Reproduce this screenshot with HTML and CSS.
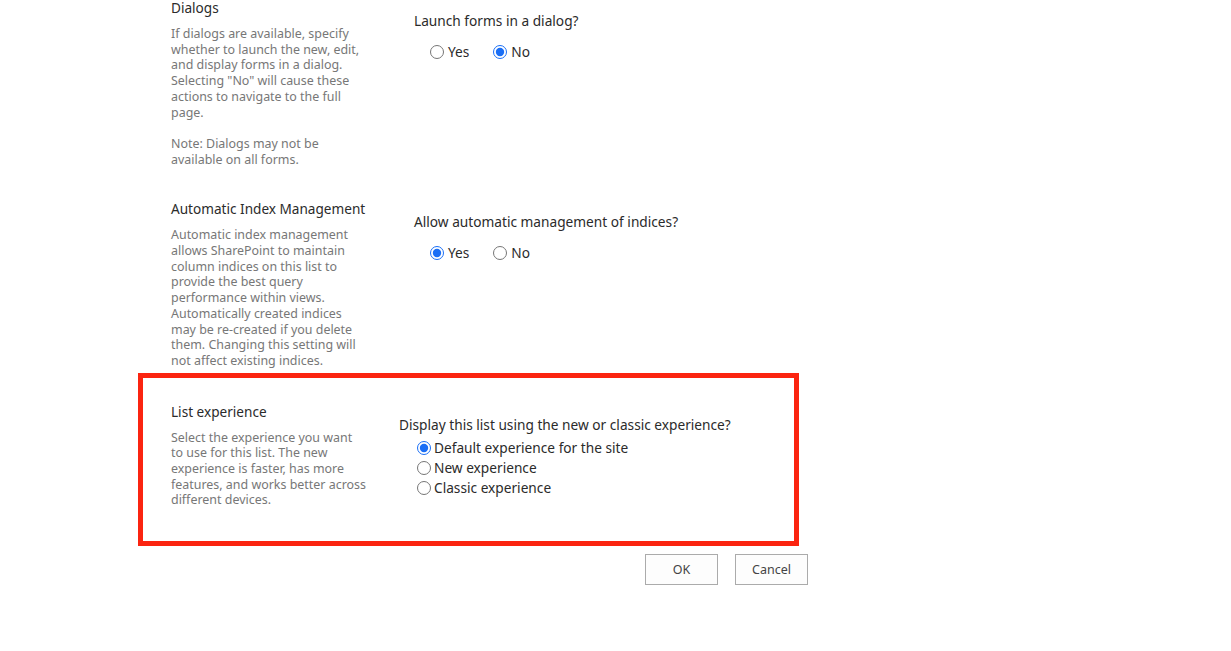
FILE: index.html
```html
<!DOCTYPE html>
<html lang="en">
<head>
<meta charset="utf-8">
<title>List settings</title>
<link rel="stylesheet" href="styles.css">
</head>
<body>
<div class="page">
  <section class="section section-first">
    <div class="info">
      <h3 class="heading">Dialogs</h3>
      <p class="desc">If dialogs are available, specify whether to launch the new, edit, and display forms in a dialog. Selecting "No" will cause these actions to navigate to the full page.</p>
      <p class="desc desc-gap">Note: Dialogs may not be available on all forms.</p>
    </div>
    <div class="control">
      <div class="question">Launch forms in a dialog?</div>
      <div class="inline-options">
        <label class="opt"><input type="radio" name="dialog"><span>Yes</span></label>
        <label class="opt"><input type="radio" name="dialog" checked><span>No</span></label>
      </div>
    </div>
  </section>

  <section class="section section-second">
    <div class="info">
      <h3 class="heading">Automatic Index Management</h3>
      <p class="desc">Automatic index management allows SharePoint to maintain column indices on this list to provide the best query performance within views. Automatically created indices may be re-created if you delete them. Changing this setting will not affect existing indices.</p>
    </div>
    <div class="control">
      <div class="question">Allow automatic management of indices?</div>
      <div class="inline-options">
        <label class="opt"><input type="radio" name="index" checked><span>Yes</span></label>
        <label class="opt"><input type="radio" name="index"><span>No</span></label>
      </div>
    </div>
  </section>

  <section class="section section-highlight">
    <div class="info">
      <h3 class="heading">List experience</h3>
      <p class="desc">Select the experience you want to use for this list. The new experience is faster, has more features, and works better across different devices.</p>
    </div>
    <div class="control">
      <div class="question">Display this list using the new or classic experience?</div>
      <div class="stack-options">
        <label class="opt"><input type="radio" name="exp" checked><span>Default experience for the site</span></label>
        <label class="opt"><input type="radio" name="exp"><span>New experience</span></label>
        <label class="opt"><input type="radio" name="exp"><span>Classic experience</span></label>
      </div>
    </div>
  </section>

  <div class="actions">
    <button class="btn" type="button">OK</button>
    <button class="btn" type="button">Cancel</button>
  </div>
</div>
</body>
</html>
```
FILE: styles.css
```css
html, body {
  margin: 0;
  padding: 0;
  background: #ffffff;
}

body {
  font-family: "Noto Sans", "Open Sans", sans-serif;
  color: #333333;
}

.page {
  margin: -1px 0 0 138px;
  width: 661px;
}

.section {
  display: grid;
  grid-template-columns: 243px 1fr;
  padding-left: 33px;
}

.section-first {
  padding-bottom: 33px;
}

.section-second {
  padding-bottom: 4px;
}

.heading {
  margin: 0;
  font-size: 13.6px;
  line-height: 18px;
  font-weight: normal;
  color: #2b2b2b;
}

.desc {
  margin: 9px 0 0;
  width: 195.5px;
  font-size: 12.45px;
  line-height: 15.7px;
  color: #777777;
}

.desc-gap {
  margin-top: 15.7px;
}

.control {
  padding-top: 13px;
}

.question {
  font-size: 13.7px;
  line-height: 18px;
  color: #2b2b2b;
}

.inline-options {
  display: flex;
  gap: 24px;
  margin-top: 13px;
  padding-left: 16px;
}

.opt {
  display: flex;
  align-items: center;
  gap: 4px;
  font-size: 13.7px;
  line-height: 18px;
  color: #2b2b2b;
}

.opt input {
  width: 14px;
  height: 14px;
  margin: 0;
  accent-color: #1a6ef5;
}

.section-highlight {
  grid-template-columns: 228px 1fr;
  border: 5px solid #fb2410;
  padding: 25px 0 33px 28px;
}

.stack-options {
  display: flex;
  flex-direction: column;
  margin-top: 4px;
  padding-left: 18px;
}

.stack-options .opt {
  height: 20px;
  gap: 3px;
}

.actions {
  display: flex;
  justify-content: flex-end;
  gap: 17px;
  width: 670px;
  margin-top: 8px;
}

.btn {
  width: 73px;
  height: 31px;
  padding: 0;
  border: 1px solid #ababab;
  background: #fdfdfd;
  font-family: "Noto Sans", "Open Sans", sans-serif;
  font-size: 12.5px;
  color: #444444;
  border-radius: 0;
}
```
